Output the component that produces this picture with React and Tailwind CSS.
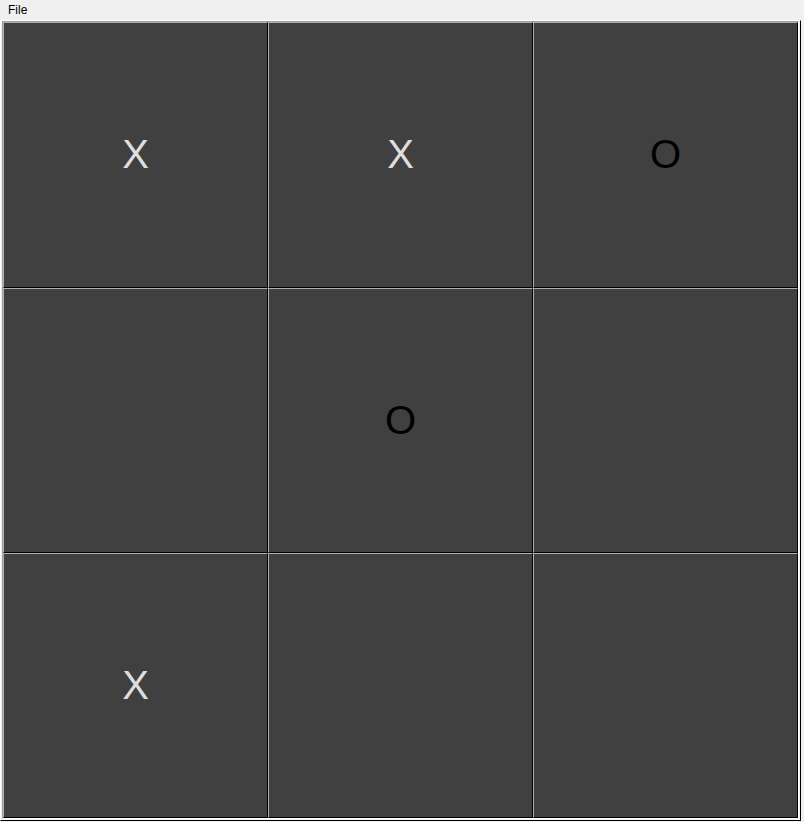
import React from "react";

const BOARD = ["X", "X", "O", "", "O", "", "X", "", ""];

function Cell({ mark }) {
  return (
    <div className="flex items-center justify-center border-l border-t border-r border-b border-l-[#b0b0b0] border-t-[#b0b0b0] border-r-black border-b-black bg-[#404040]">
      <span
        className={`-mt-[2px] text-[40px] leading-none ${mark === "X" ? "text-[#dedede]" : "text-black"}`}
        style={{ fontFamily: '"Liberation Sans", Arial, sans-serif' }}
      >
        {mark}
      </span>
    </div>
  );
}

export default function App() {
  return (
    <div className="flex h-[822px] w-[804px] flex-col overflow-hidden bg-[#f0f0f0]" style={{ fontFamily: '"Liberation Sans", Arial, sans-serif' }}>
      <div className="h-[20px] px-[8px] text-[12px] leading-[20px] text-black">File</div>
      <div className="w-[801px] border-t border-l border-r border-b border-t-white border-l-white border-r-black border-b-black">
        <div className="ml-[1px] mr-[1px] mb-[1px] border-t border-l border-r border-b border-t-[#a0a0a0] border-l-[#a0a0a0] border-r-white border-b-white">
          <div className="grid grid-cols-[265px_265px_265px] grid-rows-[266px_265px_265px]">
            {BOARD.map((mark, i) => (
              <Cell key={i} mark={mark} />
            ))}
          </div>
        </div>
      </div>
    </div>
  );
}
